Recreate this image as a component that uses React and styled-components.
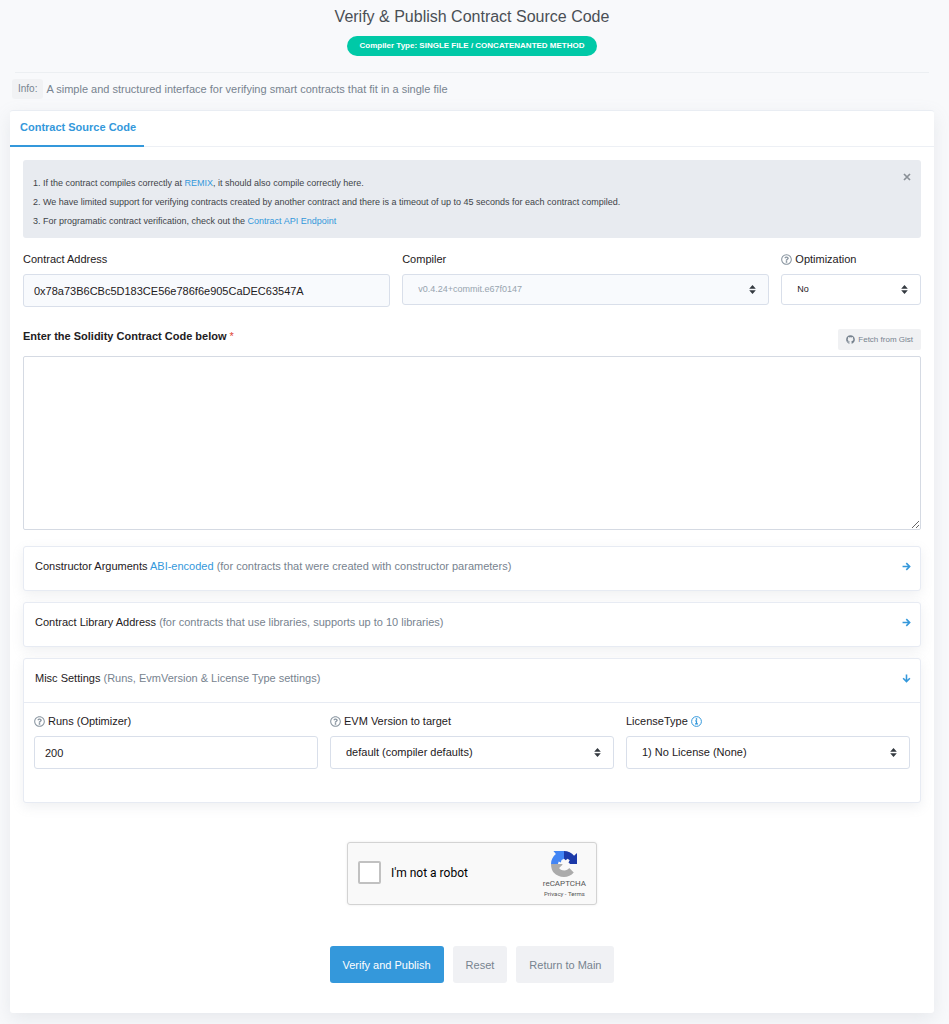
import React, { Component } from "react";
import styled, { createGlobalStyle } from "styled-components";
import { FaGithub, FaRegQuestionCircle } from "react-icons/fa";

const GlobalStyle = createGlobalStyle`
  * {
    box-sizing: border-box;
  }
  body {
    margin: 0;
    background-color: #f8f9fb;
    color: #1e2022;
    font-family: "Liberation Sans", Arial, sans-serif;
    font-size: 11px;
    line-height: 16px;
  }
  button, input, select, textarea {
    font-family: inherit;
    color: inherit;
    margin: 0;
  }
  a {
    color: #3498db;
    text-decoration: none;
  }
`;

const Page = styled.main`
  padding: 8px 15px 11px 10px;
`;

const PageHeader = styled.header`
  display: flex;
  flex-direction: column;
  align-items: center;
  margin: 0 5px;
  padding-bottom: 16px;
  border-bottom: 1px solid #eceff2;
`;

const Title = styled.h1`
  margin: 0 0 10px;
  font-size: 16px;
  font-weight: 400;
  line-height: 18px;
  color: #4a4f55;
`;

const Pill = styled.span`
  padding: 4px 12px;
  border-radius: 10px;
  background-color: #00c9a7;
  color: white;
  font-size: 8px;
  font-weight: 700;
  line-height: 12px;
`;

const InfoLine = styled.p`
  display: flex;
  align-items: center;
  gap: 3px;
  margin: 6px 2px 11px;
  color: #77838f;
`;

const InfoTag = styled.span`
  padding: 2px 6px;
  border-radius: 3px;
  background-color: #f1f2f4;
  font-size: 10px;
`;

const Card = styled.section`
  border-top: 1px solid #e9edf3;
  border-radius: 3px;
  background-color: white;
  box-shadow: 0 6px 18px rgba(140, 152, 164, 0.16);
`;

const Tabs = styled.nav`
  display: flex;
  border-bottom: 1px solid #edf0f5;
`;

const Tab = styled.a`
  margin-bottom: -1px;
  padding: 8px 8px 10px 10px;
  border-bottom: 2px solid #3498db;
  font-weight: 700;
`;

const CardBody = styled.form`
  padding: 13px 13px 30px;
`;

const Notice = styled.div`
  display: flex;
  justify-content: space-between;
  align-items: flex-start;
  padding: 10px 10px 7px;
  border-radius: 3px;
  background-color: #e8ebf0;
`;

const NoticeList = styled.ol`
  margin: 0;
  padding: 4px 0 0;
  list-style-position: inside;
  color: #3e4348;
  font-size: 9px;
  line-height: 19px;
`;

const CloseButton = styled.button`
  display: flex;
  padding: 3px 0 0;
  border: 0;
  background: none;
  color: #8a9097;
  cursor: pointer;
`;

const FieldRow = styled.div`
  display: grid;
  grid-template-columns: repeat(12, 1fr);
  align-items: start;
  gap: 12px;
`;

const TopFields = styled(FieldRow)`
  margin-top: 13px;
`;

const Field = styled.div`
  grid-column: span ${(props) => props.$span};
  min-width: 0;
`;

const Label = styled.label`
  display: flex;
  align-items: center;
  gap: 3px;
  margin-bottom: 7px;
  font-weight: ${(props) => (props.$bold ? 700 : 400)};

  svg {
    color: #8a96a1;
  }
`;

const Input = styled.input`
  display: block;
  width: 100%;
  height: 33px;
  padding: 0 10px;
  border: 1px solid #d9dfea;
  border-radius: 3px;
  background-color: ${(props) => (props.readOnly ? "#f8fafd" : "white")};
  font-size: 11px;
`;

const SelectBox = styled.div`
  position: relative;

  svg {
    position: absolute;
    top: 50%;
    right: 13px;
    margin-top: -5px;
    pointer-events: none;
  }
`;

const Select = styled.select`
  display: block;
  width: 100%;
  height: ${(props) => (props.$small ? "31px" : "33px")};
  padding: 0 28px 2px 15px;
  border: 1px solid #d9dfea;
  border-radius: 3px;
  appearance: none;
  background-color: white;
  font-size: ${(props) => (props.$small ? "9px" : "11px")};

  &:disabled {
    background-color: #f8fafd;
    color: #97a4af;
    opacity: 1;
  }
`;

const CodeHeader = styled.div`
  display: flex;
  justify-content: space-between;
  align-items: center;
  margin: 21px 0 6px;

  label {
    margin-bottom: 6px;
  }
`;

const Required = styled.span`
  color: #de4437;
  font-weight: 400;
`;

const GistButton = styled.button`
  display: flex;
  align-items: center;
  gap: 3px;
  height: 21px;
  padding: 0 8px;
  border: 0;
  border-radius: 2px;
  background-color: #f0f1f3;
  color: #77838f;
  font-size: 8px;
`;

const CodeArea = styled.textarea`
  display: block;
  width: 100%;
  height: 174px;
  padding: 8px 10px;
  border: 1px solid #d5dae3;
  border-radius: 2px;
  resize: vertical;
`;

const Panels = styled.div`
  display: flex;
  flex-direction: column;
  gap: 11px;
  margin-top: 16px;
`;

const Panel = styled.section`
  border: 1px solid #e7ebf3;
  border-radius: 3px;
  background-color: white;
  box-shadow: 0 4px 12px rgba(140, 152, 164, 0.14);
`;

const PanelHeader = styled.div`
  display: flex;
  justify-content: space-between;
  align-items: center;
  padding: 11px 9px 16px 11px;
`;

const PanelTitle = styled.h2`
  margin: 0;
  font-size: 11px;
  font-weight: 400;
`;

const Muted = styled.span`
  color: #77838f;
`;

const ToggleButton = styled.button`
  display: flex;
  padding: 0;
  border: 0;
  background: none;
  color: #3498db;
  cursor: pointer;
`;

const PanelBody = styled.div`
  padding: 10px 10px 33px;
  border-top: 1px solid #e7ebf3;
`;

const Captcha = styled.div`
  display: flex;
  justify-content: space-between;
  align-items: center;
  width: 250px;
  height: 63px;
  margin: 39px auto 41px;
  padding: 0 10px;
  border: 1px solid #d3d3d3;
  border-radius: 3px;
  background-color: #f9f9f9;
  box-shadow: 0 0 3px rgba(0, 0, 0, 0.08);
  color: #000;
  font-family: Roboto, sans-serif;
`;

const RobotLabel = styled.label`
  display: flex;
  align-items: center;
  gap: 10px;
  padding-bottom: 2px;
  font-size: 12px;
`;

const RobotCheck = styled.input`
  width: 23px;
  height: 23px;
  margin: 0;
  border: 2px solid #c1c1c1;
  border-radius: 2px;
  appearance: none;
  background-color: white;
`;

const CaptchaBrand = styled.div`
  display: flex;
  flex-direction: column;
  align-items: center;
  gap: 1px;
  padding-top: 2px;
  color: #555;
  font-size: 8px;
  line-height: 11px;
`;

const CaptchaLinks = styled.small`
  font-size: 6px;
  line-height: 8px;

  a {
    color: inherit;
  }
`;

const Actions = styled.div`
  display: flex;
  justify-content: center;
  gap: 9px;
`;

const ActionButton = styled.button`
  height: 37px;
  padding: 0 13px;
  border: 0;
  border-radius: 3px;
  background-color: ${(props) => (props.$primary ? "#3498db" : "#f0f1f4")};
  color: ${(props) => (props.$primary ? "white" : "#77838f")};
  font-size: 11px;
  cursor: pointer;
`;

const SortIcon = () => (
  <svg width="7" height="9" viewBox="0 0 7 9" fill="#343a40" aria-hidden="true">
    <path d="M3.5 0 6.8 3.7H.2ZM.2 5.2h6.6L3.5 8.9Z" />
  </svg>
);

const CloseIcon = () => (
  <svg width="8" height="8" viewBox="0 0 8 8" stroke="currentColor" strokeWidth="1.7" aria-hidden="true">
    <path d="m1 1 6 6M7 1 1 7" />
  </svg>
);

const InfoIcon = () => (
  <svg width="11" height="11" viewBox="0 0 22 22" fill="none" stroke="#3498db" aria-hidden="true">
    <circle cx="11" cy="11" r="9.8" strokeWidth="2" />
    <path d="M8.5 9.6H11v6.2M8 15.8h6" strokeWidth="2.4" />
    <circle cx="11" cy="6" r="1.3" fill="#3498db" />
  </svg>
);

const ArrowRight = () => (
  <svg width="9" height="9" viewBox="0 0 16 16" fill="none" stroke="currentColor" strokeWidth="2.8" aria-hidden="true">
    <path d="M1 8h13M7.6 2 13.6 8l-6 6" />
  </svg>
);

const ArrowDown = () => (
  <svg width="9" height="9" viewBox="0 0 16 16" fill="none" stroke="currentColor" strokeWidth="2.8" aria-hidden="true">
    <path d="M8 1v13M2 7.6l6 6 6-6" />
  </svg>
);

const CaptchaLogo = () => (
  <svg width="26" height="26" viewBox="0 0 64 64" aria-hidden="true">
    <path fill="#1c3aa9" d="M64 32V4.7l-7.2 7.1C50.9 4.7 42 .1 32 .1V19l4 4 5-4 5 4-3 5 4 4z" />
    <path fill="#4285f4" d="M32 .1H6l6 7.2C4.6 13.1 0 22 0 32h17l2-6 5 2 2-6 6-3z" />
    <path fill="#ababab" d="M0 32c0 10 3 17 7 21.500C13 60 22 64 32 64c9.500 0 18-4 24-11L45 42c-3 4-7 6-12 6-7 0-11-3-13-6l9-9-3-1z" />
  </svg>
);

export default class App extends Component {
  state = {
    runs: "200",
    code: "",
    paineis: [
      {
        titulo: "Constructor Arguments",
        link: "ABI-encoded",
        detalhe: "(for contracts that were created with constructor parameters)"
      },
      {
        titulo: "Contract Library Address",
        detalhe: "(for contracts that use libraries, supports up to 10 libraries)"
      },
      {
        titulo: "Misc Settings",
        detalhe: "(Runs, EvmVersion & License Type settings)",
        aberto: true
      }
    ]
  };

  renderSettings() {
    return (
      <PanelBody>
        <FieldRow>
          <Field $span={4}>
            <Label htmlFor="runs">
              <FaRegQuestionCircle size={11} /> Runs (Optimizer)
            </Label>
            <Input
              id="runs"
              value={this.state.runs}
              onChange={(e) => this.setState({ runs: e.target.value })}
            />
          </Field>
          <Field $span={4}>
            <Label htmlFor="evm">
              <FaRegQuestionCircle size={11} /> EVM Version to target
            </Label>
            <SelectBox>
              <Select id="evm">
                <option>default (compiler defaults)</option>
              </Select>
              <SortIcon />
            </SelectBox>
          </Field>
          <Field $span={4}>
            <Label htmlFor="license">
              LicenseType <InfoIcon />
            </Label>
            <SelectBox>
              <Select id="license">
                <option>1) No License (None)</option>
              </Select>
              <SortIcon />
            </SelectBox>
          </Field>
        </FieldRow>
      </PanelBody>
    );
  }

  render() {
    return (
      <Page>
        <GlobalStyle />
        <PageHeader>
          <Title>Verify & Publish Contract Source Code</Title>
          <Pill>Compiler Type: SINGLE FILE / CONCATENANTED METHOD</Pill>
        </PageHeader>
        <InfoLine>
          <InfoTag>Info:</InfoTag>
          A simple and structured interface for verifying smart contracts that fit in a single file
        </InfoLine>

        <Card>
          <Tabs>
            <Tab href="#source">Contract Source Code</Tab>
          </Tabs>
          <CardBody id="source" onSubmit={(e) => e.preventDefault()}>
            <Notice>
              <NoticeList>
                <li>
                  If the contract compiles correctly at <a href="#remix">REMIX</a>, it should also compile correctly here.
                </li>
                <li>
                  We have limited support for verifying contracts created by another contract and there is a timeout of up to 45 seconds for each contract compiled.
                </li>
                <li>
                  For programatic contract verification, check out the <a href="#api">Contract API Endpoint</a>
                </li>
              </NoticeList>
              <CloseButton type="button" aria-label="Close">
                <CloseIcon />
              </CloseButton>
            </Notice>

            <TopFields>
              <Field $span={5}>
                <Label htmlFor="address">Contract Address</Label>
                <Input id="address" readOnly value="0x78a73B6CBc5D183CE56e786f6e905CaDEC63547A" />
              </Field>
              <Field $span={5}>
                <Label htmlFor="compiler">Compiler</Label>
                <SelectBox>
                  <Select id="compiler" $small disabled>
                    <option>v0.4.24+commit.e67f0147</option>
                  </Select>
                  <SortIcon />
                </SelectBox>
              </Field>
              <Field $span={2}>
                <Label htmlFor="optimization">
                  <FaRegQuestionCircle size={11} /> Optimization
                </Label>
                <SelectBox>
                  <Select id="optimization" $small>
                    <option>No</option>
                    <option>Yes</option>
                  </Select>
                  <SortIcon />
                </SelectBox>
              </Field>
            </TopFields>

            <CodeHeader>
              <Label htmlFor="code" $bold>
                Enter the Solidity Contract Code below <Required>*</Required>
              </Label>
              <GistButton type="button">
                <FaGithub size={9} /> Fetch from Gist
              </GistButton>
            </CodeHeader>
            <CodeArea
              id="code"
              value={this.state.code}
              onChange={(e) => this.setState({ code: e.target.value })}
            />

            <Panels>
              {this.state.paineis.map((item) => (
                <Panel key={item.titulo}>
                  <PanelHeader>
                    <PanelTitle>
                      {item.titulo} {item.link && <a href="#abi">{item.link}</a>} <Muted>{item.detalhe}</Muted>
                    </PanelTitle>
                    <ToggleButton type="button" aria-label={item.titulo} aria-expanded={!!item.aberto}>
                      {item.aberto ? <ArrowDown /> : <ArrowRight />}
                    </ToggleButton>
                  </PanelHeader>
                  {item.aberto && this.renderSettings()}
                </Panel>
              ))}
            </Panels>

            <Captcha>
              <RobotLabel>
                <RobotCheck type="checkbox" /> I'm not a robot
              </RobotLabel>
              <CaptchaBrand>
                <CaptchaLogo />
                reCAPTCHA
                <CaptchaLinks>
                  <a href="#privacy">Privacy</a> - <a href="#terms">Terms</a>
                </CaptchaLinks>
              </CaptchaBrand>
            </Captcha>

            <Actions>
              <ActionButton type="submit" $primary>Verify and Publish</ActionButton>
              <ActionButton type="reset">Reset</ActionButton>
              <ActionButton type="button">Return to Main</ActionButton>
            </Actions>
          </CardBody>
        </Card>
      </Page>
    );
  }
}
